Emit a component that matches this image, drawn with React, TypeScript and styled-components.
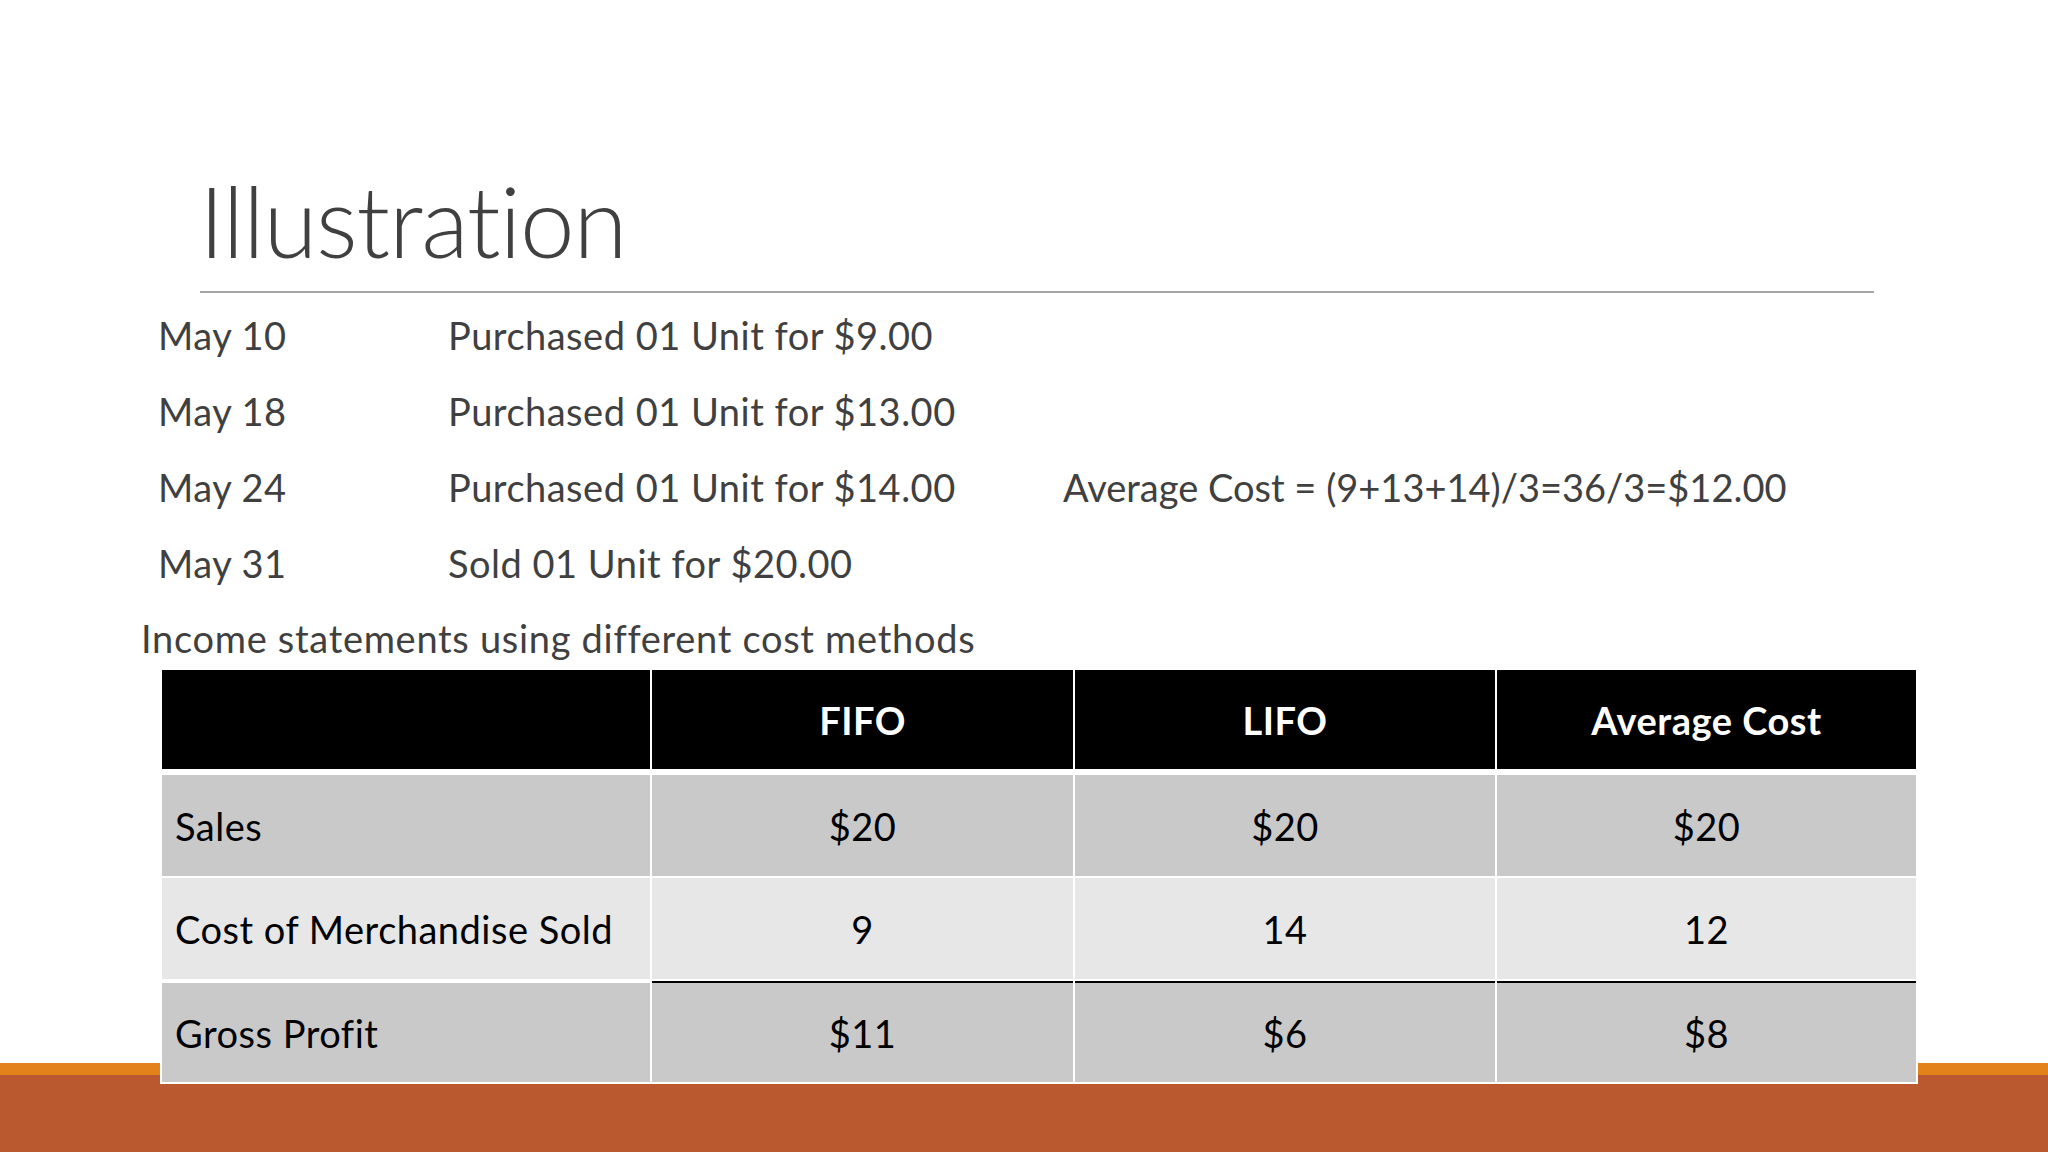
import styled, { createGlobalStyle } from 'styled-components'

const GlobalStyle = createGlobalStyle`
  html, body {
    margin: 0;
    padding: 0;
    background: #fff;
  }
  body {
    font-family: Lato, "Open Sans", sans-serif;
    font-variant-ligatures: none;
  }
`

const events = [
    { date: 'May 10', text: 'Purchased 01 Unit for $9.00', note: '' },
    { date: 'May 18', text: 'Purchased 01 Unit for $13.00', note: '' },
    { date: 'May 24', text: 'Purchased 01 Unit for $14.00', note: 'Average Cost = (9+13+14)/3=36/3=$12.00' },
    { date: 'May 31', text: 'Sold 01 Unit for $20.00', note: '' },
]

const rows = [
    { label: 'Sales', values: ['$20', '$20', '$20'], tone: 'dark', top: 6 },
    { label: 'Cost of Merchandise Sold', values: ['9', '14', '12'], tone: 'light', top: 2 },
    { label: 'Gross Profit', values: ['$11', '$6', '$8'], tone: 'dark', top: 2, total: true },
]

export default function App() {
    return (
        <>
            <GlobalStyle />
            <Slide>
                <Band />
                <Content>
                    <Title>Illustration</Title>
                    <Rule />
                    <Events>
                        {events.map((e) => (
                            <EventRow key={e.date}>
                                <span>{e.date}</span>
                                <span>{e.text}</span>
                                <Note>{e.note}</Note>
                            </EventRow>
                        ))}
                    </Events>
                    <Caption>Income statements using different cost methods</Caption>
                    <Table>
                        <Row $top={0}>
                            <HeadCell />
                            <HeadCell>FIFO</HeadCell>
                            <HeadCell>LIFO</HeadCell>
                            <HeadCell>Average Cost</HeadCell>
                        </Row>
                        {rows.map((r) => (
                            <Row key={r.label} $top={r.top}>
                                <Cell $tone={r.tone} $label $rule={r.total ? '#fff' : ''}>{r.label}</Cell>
                                {r.values.map((v, i) => (
                                    <Cell key={i} $tone={r.tone} $rule={r.total ? '#000' : ''}>{v}</Cell>
                                ))}
                            </Row>
                        ))}
                    </Table>
                </Content>
            </Slide>
        </>
    )
}

const Slide = styled.div`
    position: relative;
    width: 2048px;
    height: 1152px;
    overflow: hidden;
    background: #fff;
`

const Band = styled.div`
    position: absolute;
    left: 0;
    right: 0;
    bottom: 0;
    height: 77px;
    background: #ba582f;
    border-top: 12px solid #e3821a;
`

const Content = styled.div`
    position: relative;
    z-index: 1;
    display: flex;
    flex-direction: column;
    padding-top: 160px;
    color: #404040;
`

const Title = styled.h1`
    all: unset;
    display: block;
    margin-left: 199px;
    font-family: Lato, sans-serif;
    font-weight: 300;
    font-size: 98px;
    line-height: 120px;
    letter-spacing: -1.2px;
    font-variant-ligatures: none;
    color: #404040;
`

const Rule = styled.div`
    margin: 11px 0 0 200px;
    width: 1674px;
    height: 2px;
    background: #a6a6a6;
`

const Events = styled.div`
    display: flex;
    flex-direction: column;
    margin-top: 4px;
    margin-left: 158px;
`

const EventRow = styled.div`
    display: grid;
    grid-template-columns: 290px 615px auto;
    font-size: 38px;
    line-height: 76px;
    letter-spacing: 0.5px;
    white-space: nowrap;
`

const Note = styled.span`
    letter-spacing: 0;
`

const Caption = styled.div`
    margin-left: 141px;
    padding-top: 7px;
    font-size: 38px;
    line-height: 60px;
    letter-spacing: 0.7px;
    white-space: nowrap;
`

const Table = styled.div`
    display: flex;
    flex-direction: column;
    margin-left: 160px;
    width: 1758px;
    box-sizing: border-box;
    padding: 2px;
    background: #fff;
`

const Row = styled.div<{ $top: number }>`
    display: grid;
    grid-template-columns: 488px 421px 420px 419px;
    column-gap: 2px;
    margin-top: ${(p) => p.$top}px;
`

const HeadCell = styled.div`
    height: 99px;
    display: flex;
    align-items: center;
    justify-content: center;
    background: #000;
    color: #fff;
    font-weight: 700;
    font-size: 38px;
    letter-spacing: 0.5px;
`

const Cell = styled.div<{ $tone: string; $label?: boolean; $rule?: string }>`
    height: 101px;
    box-sizing: border-box;
    display: flex;
    align-items: center;
    justify-content: ${(p) => (p.$label ? 'flex-start' : 'center')};
    padding-left: ${(p) => (p.$label ? '13px' : '0')};
    background: ${(p) => (p.$tone === 'dark' ? '#c9c9c9' : '#e7e7e7')};
    border-top: ${(p) => (p.$rule ? `2px solid ${p.$rule}` : 'none')};
    color: #000;
    font-size: 38px;
    letter-spacing: 0.5px;
    white-space: nowrap;
`
